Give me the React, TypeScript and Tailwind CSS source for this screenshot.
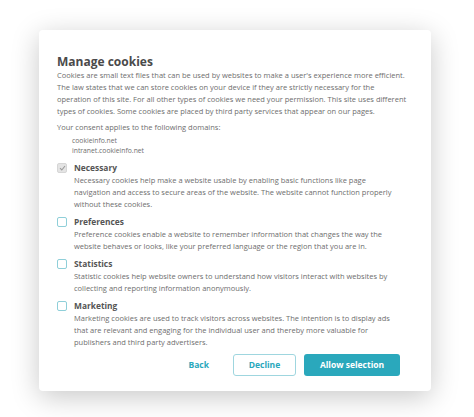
import React from "react";

const items = [
  {
    title: "Necessary",
    lines: [
      "Necessary cookies help make a website usable by enabling basic functions like page",
      "navigation and access to secure areas of the website. The website cannot function properly",
      "without these cookies.",
    ],
    disabled: true,
  },
  {
    title: "Preferences",
    lines: [
      "Preference cookies enable a website to remember information that changes the way the",
      "website behaves or looks, like your preferred language or the region that you are in.",
    ],
  },
  {
    title: "Statistics",
    lines: [
      "Statistic cookies help website owners to understand how visitors interact with websites by",
      "collecting and reporting information anonymously.",
    ],
  },
  {
    title: "Marketing",
    lines: [
      "Marketing cookies are used to track visitors across websites. The intention is to display ads",
      "that are relevant and engaging for the individual user and thereby more valuable for",
      "publishers and third party advertisers.",
    ],
  },
];

const intro = [
  "Cookies are small text files that can be used by websites to make a user's experience more efficient.",
  "The law states that we can store cookies on your device if they are strictly necessary for the",
  "operation of this site. For all other types of cookies we need your permission. This site uses different",
  "types of cookies. Some cookies are placed by third party services that appear on our pages.",
];

function Check({ disabled }: { disabled?: boolean }) {
  if (disabled) {
    return (
      <div className="w-[10px] h-[10px] rounded-[2px] bg-[#e4e4e4] border border-[#d6d6d6] flex items-center justify-center shrink-0">
        <svg width="7" height="6" viewBox="0 0 7 6">
          <path d="M1 3.2 L2.8 5 L6 1" fill="none" stroke="#9a9a9a" strokeWidth="1.1" />
        </svg>
      </div>
    );
  }
  return <div className="w-[10px] h-[10px] rounded-[2px] bg-white border border-[#8fcfd9] shrink-0" />;
}

export default function App() {
  return (
    <div
      className="w-[474px] h-[417px] bg-white pl-[39px] pt-[30px]"
      style={{ fontFamily: '"Open Sans", sans-serif' }}
    >
      <div className="w-[392px] h-[361px] bg-white rounded-[4px] shadow-[0_6px_28px_rgba(0,0,0,0.22)] px-[18px] pt-[25px] text-[#6e6e6e]">
        <div className="text-[12px] leading-[14px] font-bold text-[#4a4a4a]">Manage cookies</div>
        <div className="text-[7.5px] leading-[12px] whitespace-nowrap">
          {intro.map((l) => (
            <div key={l}>{l}</div>
          ))}
        </div>
        <div className="text-[7.5px] leading-[12px] mt-[4px]">Your consent applies to the following domains:</div>
        <div className="text-[6.8px] leading-[10px] mt-[3px] pl-[15px]">
          <div>cookieinfo.net</div>
          <div>intranet.cookieinfo.net</div>
        </div>
        <div className="mt-[6px] flex flex-col gap-[6px]">
          {items.map((it) => (
            <div key={it.title} className="flex gap-[7px]">
              <div className="h-[12px] flex items-center">
                <Check disabled={it.disabled} />
              </div>
              <div className="flex-1">
                <div className="text-[8.4px] leading-[12px] font-bold text-[#555]">{it.title}</div>
                <div className="text-[7.5px] leading-[12px] whitespace-nowrap">
                  {it.lines.map((l) => (
                    <div key={l}>{l}</div>
                  ))}
                </div>
              </div>
            </div>
          ))}
        </div>
        <div className="mt-[6px] flex justify-end items-center gap-[8px] pr-[13px]">
          <button className="h-[22px] px-[16px] text-[8.5px] font-bold text-[#2aa8bc]">Back</button>
          <button className="h-[22px] w-[63px] rounded-[3px] border border-[#9fd6df] bg-white text-[8.5px] font-bold text-[#2aa8bc]">
            Decline
          </button>
          <button className="h-[22px] w-[96px] rounded-[3px] bg-[#2aa8bc] text-[8.5px] font-bold text-white">
            Allow selection
          </button>
        </div>
      </div>
    </div>
  );
}
